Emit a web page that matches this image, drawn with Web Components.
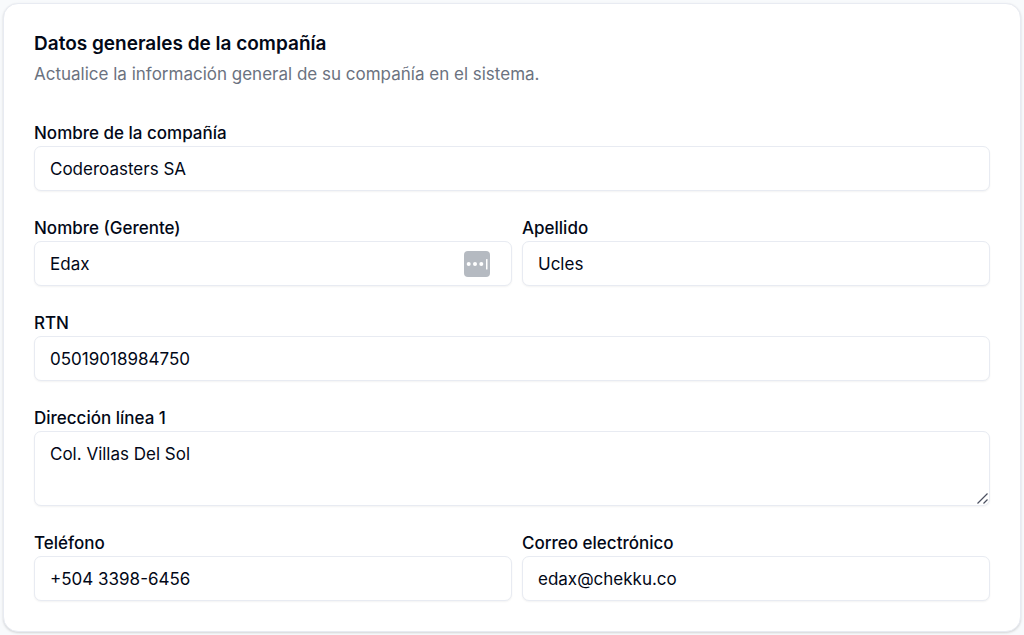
<!DOCTYPE html>
<html lang="es">
<head>
<meta charset="utf-8">
<meta name="viewport" content="width=device-width, initial-scale=1">
<title>Datos generales de la compañía</title>
<style>
	body {
		margin: 0;
		padding: 3px;
		background: #f8fafc;
		color: #020817;
		font-family: Inter, "Liberation Sans", sans-serif;
		font-size: 17px;
	}
</style>
</head>
<body>
<settings-card>
	<span slot="title">Datos generales de la compañía</span>
	<span slot="description">Actualice la información general de su compañía en el sistema.</span>

	<form-field label="Nombre de la compañía" name="company" value="Coderoasters SA"></form-field>
	<field-row>
		<form-field label="Nombre (Gerente)" name="firstName" value="Edax">
			<autofill-button slot="action"></autofill-button>
		</form-field>
		<form-field label="Apellido" name="lastName" value="Ucles"></form-field>
	</field-row>
	<form-field label="RTN" name="rtn" value="05019018984750"></form-field>
	<form-field label="Dirección línea 1" name="address" value="Col. Villas Del Sol" multiline></form-field>
	<field-row>
		<form-field label="Teléfono" name="phone" type="tel" value="+504 3398-6456"></form-field>
		<form-field label="Correo electrónico" name="email" type="email" value="edax@chekku.co"></form-field>
	</field-row>
</settings-card>

<script>
class SettingsCard extends HTMLElement {
	constructor() {
		super();
		this.attachShadow({ mode: "open" });
		this.shadowRoot.innerHTML = `
      <style>
        :host {
          display: block;
          padding: 30px;
          background: #fff;
          border: 1px solid #e8ebf2;
          border-radius: 15px;
          box-shadow: 0 1px 3px rgba(0, 0, 0, 0.1), 0 1px 2px rgba(0, 0, 0, 0.06);
        }

        header {
          margin-bottom: 38px;
        }

        h2 {
          margin: 0 0 8px;
          font-size: 19px;
          font-weight: 600;
          line-height: 20px;
        }

        p {
          margin: 0;
          color: #6b7280;
          line-height: 24px;
        }

        form {
          display: flex;
          flex-direction: column;
          gap: 28px;
        }
      </style>
      <header>
        <h2><slot name="title"></slot></h2>
        <p><slot name="description"></slot></p>
      </header>
      <form><slot></slot></form>
`;
	}
}

class FieldRow extends HTMLElement {
	constructor() {
		super();
		this.attachShadow({ mode: "open" });
		this.shadowRoot.innerHTML = `
      <style>
        :host {
          display: flex;
          gap: 10px;
        }

        ::slotted(*) {
          flex: 1;
          min-width: 0;
        }

        ::slotted(:first-child) {
          flex: 0 0 50%;
        }
      </style>
      <slot></slot>
`;
	}
}

class FormField extends HTMLElement {
	constructor() {
		super();
		this.attachShadow({ mode: "open" });
	}

	connectedCallback() {
		this.render();
	}

	render() {
		const multiline = this.hasAttribute("multiline");
		const control = multiline
			? `<textarea id="control"></textarea>
        <svg class="grip" width="11" height="11" viewBox="0 0 11 11" aria-hidden="true">
          <path d="M.5 10.5l10-10M6.5 10.5l4-4" stroke="#4b5060" stroke-width="1.2"/>
        </svg>`
			: `<input id="control" type="${this.getAttribute("type") || "text"}">`;

		this.shadowRoot.innerHTML = `
      <style>
        :host {
          display: block;
        }

        label {
          display: block;
          width: fit-content;
          margin-bottom: 4px;
          font-weight: 500;
          line-height: 18px;
        }

        .control {
          position: relative;
          display: flex;
        }

        input,
        textarea {
          box-sizing: border-box;
          width: 100%;
          height: 45px;
          margin: 0;
          padding: 0 15px;
          color: inherit;
          background: #fff;
          border: 1px solid #e8ebf2;
          border-radius: 7px;
          box-shadow: 0 1px 2px rgba(0, 0, 0, 0.05);
          font: inherit;
          outline: none;
        }

        textarea {
          height: 75px;
          padding: 10px 15px;
          line-height: 24px;
          resize: vertical;
        }

        textarea::-webkit-resizer {
          background: transparent;
        }

        input:focus,
        textarea:focus {
          border-color: #94a3b8;
        }

        .grip {
          position: absolute;
          right: 2px;
          bottom: 2px;
          fill: none;
          pointer-events: none;
        }

        /* sits over the right end of the text box */
        slot[name="action"] {
          position: absolute;
          top: 0;
          right: 22px;
          bottom: 0;
          display: flex;
          align-items: center;
        }
      </style>
      <label for="control"></label>
      <div class="control">
        ${control}
        <slot name="action"></slot>
      </div>
`;
		this.shadowRoot.querySelector("label").textContent = this.getAttribute("label");

		const input = this.shadowRoot.getElementById("control");
		input.name = this.getAttribute("name");
		input.value = this.getAttribute("value") || "";
	}
}

class AutofillButton extends HTMLElement {
	constructor() {
		super();
		this.attachShadow({ mode: "open" });
		this.shadowRoot.innerHTML = `
      <style>
        :host {
          display: block;
        }

        button {
          display: block;
          padding: 0;
          background: none;
          border: 0;
          cursor: pointer;
        }

        svg {
          display: block;
        }
      </style>
      <button type="button" aria-label="Autocompletar">
        <svg width="26" height="26" viewBox="0 0 26 26" aria-hidden="true">
          <rect width="26" height="26" rx="4" fill="#b5bac1"/>
          <g fill="#fff">
            <circle cx="4.7" cy="13" r="2"/>
            <circle cx="11" cy="13" r="2"/>
            <circle cx="17.3" cy="13" r="2"/>
            <rect x="22" y="8" width="1.5" height="10.5" rx=".5"/>
          </g>
        </svg>
      </button>
`;
	}
}

customElements.define("settings-card", SettingsCard);
customElements.define("field-row", FieldRow);
customElements.define("form-field", FormField);
customElements.define("autofill-button", AutofillButton);
</script>
</body>
</html>
